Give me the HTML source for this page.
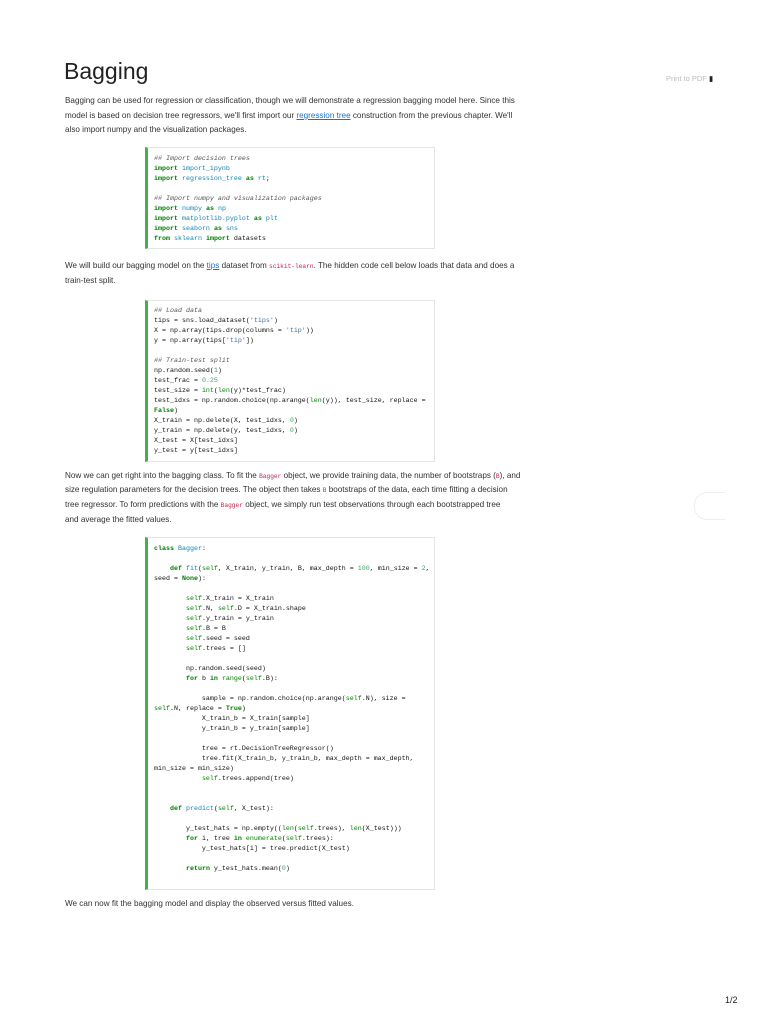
<!DOCTYPE html>
<html><head><meta charset="utf-8"><style>
html,body{margin:0;padding:0;background:#fff;width:768px;height:1024px;overflow:hidden;position:relative}
.t{position:absolute;left:65px;font-family:"Liberation Sans",sans-serif;font-size:8.15px;color:#333;white-space:nowrap;line-height:10px}
.t a{color:#1a73c8;text-decoration:underline}
.ic{font-family:"Liberation Mono",monospace;font-size:6.2px;color:#c7254e}
.cb{position:absolute;left:145px;width:286px;border:1px solid #e4e4e4;border-left:3px solid #44b04c;background:#fff}
.l{position:absolute;left:6px;font-family:"Liberation Mono",monospace;font-size:6.67px;line-height:10px;white-space:pre;color:#111}
.k{color:#008000;font-weight:bold}.n{color:#0e84b5}.c{color:#555;font-style:italic}.m{color:#40a070}.s{color:#4070a0}.b{color:#008000}
</style></head><body>
<div style="position:absolute;left:64px;top:58px;font-family:'Liberation Sans',sans-serif;font-size:23px;color:#222">Bagging</div>
<div style="position:absolute;left:666px;top:74px;font-family:'Liberation Sans',sans-serif;font-size:7.5px;color:#bbb">Print to PDF <span style="color:#222">&#9646;</span></div>

<div class="t" style="top:96px">Bagging can be used for regression or classification, though we will demonstrate a regression bagging model here. Since this</div>
<div class="t" style="top:111px">model is based on decision tree regressors, we'll first import our <a>regression tree</a> construction from the previous chapter. We'll</div>
<div class="t" style="top:125px">also import numpy and the visualization packages.</div>

<div class="cb" style="top:147px;height:100px">
<div class="l" style="top:6px"><span class="c">## Import decision trees</span></div>
<div class="l" style="top:16px"><span class="k">import</span> <span class="n">import_ipynb</span></div>
<div class="l" style="top:26px"><span class="k">import</span> <span class="n">regression_tree</span> <span class="k">as</span> <span class="n">rt</span>;</div>
<div class="l" style="top:46px"><span class="c">## Import numpy and visualization packages</span></div>
<div class="l" style="top:56px"><span class="k">import</span> <span class="n">numpy</span> <span class="k">as</span> <span class="n">np</span></div>
<div class="l" style="top:66px"><span class="k">import</span> <span class="n">matplotlib.pyplot</span> <span class="k">as</span> <span class="n">plt</span></div>
<div class="l" style="top:76px"><span class="k">import</span> <span class="n">seaborn</span> <span class="k">as</span> <span class="n">sns</span></div>
<div class="l" style="top:86px"><span class="k">from</span> <span class="n">sklearn</span> <span class="k">import</span> datasets</div>
</div>

<div class="t" style="top:261px">We will build our bagging model on the <a>tips</a> dataset from <span class="ic">scikit-learn</span>. The hidden code cell below loads that data and does a</div>
<div class="t" style="top:276px">train-test split.</div>

<div class="cb" style="top:300px;height:160px">
<div class="l" style="top:5px"><span class="c">## Load data</span></div>
<div class="l" style="top:15px">tips = sns.load_dataset(<span class="s">'tips'</span>)</div>
<div class="l" style="top:25px">X = np.array(tips.drop(columns = <span class="s">'tip'</span>))</div>
<div class="l" style="top:35px">y = np.array(tips[<span class="s">'tip'</span>])</div>
<div class="l" style="top:55px"><span class="c">## Train-test split</span></div>
<div class="l" style="top:65px">np.random.seed(<span class="m">1</span>)</div>
<div class="l" style="top:75px">test_frac = <span class="m">0.25</span></div>
<div class="l" style="top:85px">test_size = <span class="b">int</span>(<span class="b">len</span>(y)*test_frac)</div>
<div class="l" style="top:95px">test_idxs = np.random.choice(np.arange(<span class="b">len</span>(y)), test_size, replace =</div>
<div class="l" style="top:105px"><span class="k">False</span>)</div>
<div class="l" style="top:115px">X_train = np.delete(X, test_idxs, <span class="m">0</span>)</div>
<div class="l" style="top:125px">y_train = np.delete(y, test_idxs, <span class="m">0</span>)</div>
<div class="l" style="top:135px">X_test = X[test_idxs]</div>
<div class="l" style="top:145px">y_test = y[test_idxs]</div>
</div>

<div class="t" style="top:471px">Now we can get right into the bagging class. To fit the <span class="ic">Bagger</span> object, we provide training data, the number of bootstraps (<span class="ic">B</span>), and</div>
<div class="t" style="top:485px">size regulation parameters for the decision trees. The object then takes <span class="ic">B</span> bootstraps of the data, each time fitting a decision</div>
<div class="t" style="top:500px">tree regressor. To form predictions with the <span class="ic">Bagger</span> object, we simply run test observations through each bootstrapped tree</div>
<div class="t" style="top:515px">and average the fitted values.</div>

<div style="position:absolute;left:694px;top:492px;width:30px;height:26px;border:1px solid #eee;border-right:none;border-radius:13px 0 0 13px;background:#fff"></div>

<div class="cb" style="top:537px;height:351px">
<div class="l" style="top:6px"><span class="k">class</span> <span class="n">Bagger</span>:</div>
<div class="l" style="top:26px">    <span class="k">def</span> <span class="n">fit</span>(<span class="b">self</span>, X_train, y_train, B, max_depth = <span class="m">100</span>, min_size = <span class="m">2</span>,</div>
<div class="l" style="top:36px">seed = <span class="k">None</span>):</div>
<div class="l" style="top:56px">        <span class="b">self</span>.X_train = X_train</div>
<div class="l" style="top:66px">        <span class="b">self</span>.N, <span class="b">self</span>.D = X_train.shape</div>
<div class="l" style="top:76px">        <span class="b">self</span>.y_train = y_train</div>
<div class="l" style="top:86px">        <span class="b">self</span>.B = B</div>
<div class="l" style="top:96px">        <span class="b">self</span>.seed = seed</div>
<div class="l" style="top:106px">        <span class="b">self</span>.trees = []</div>
<div class="l" style="top:126px">        np.random.seed(seed)</div>
<div class="l" style="top:136px">        <span class="k">for</span> b <span class="k">in</span> <span class="b">range</span>(<span class="b">self</span>.B):</div>
<div class="l" style="top:156px">            sample = np.random.choice(np.arange(<span class="b">self</span>.N), size =</div>
<div class="l" style="top:166px"><span class="b">self</span>.N, replace = <span class="k">True</span>)</div>
<div class="l" style="top:176px">            X_train_b = X_train[sample]</div>
<div class="l" style="top:186px">            y_train_b = y_train[sample]</div>
<div class="l" style="top:206px">            tree = rt.DecisionTreeRegressor()</div>
<div class="l" style="top:216px">            tree.fit(X_train_b, y_train_b, max_depth = max_depth,</div>
<div class="l" style="top:226px">min_size = min_size)</div>
<div class="l" style="top:236px">            <span class="b">self</span>.trees.append(tree)</div>
<div class="l" style="top:266px">    <span class="k">def</span> <span class="n">predict</span>(<span class="b">self</span>, X_test):</div>
<div class="l" style="top:286px">        y_test_hats = np.empty((<span class="b">len</span>(<span class="b">self</span>.trees), <span class="b">len</span>(X_test)))</div>
<div class="l" style="top:296px">        <span class="k">for</span> i, tree <span class="k">in</span> <span class="b">enumerate</span>(<span class="b">self</span>.trees):</div>
<div class="l" style="top:306px">            y_test_hats[i] = tree.predict(X_test)</div>
<div class="l" style="top:326px">        <span class="k">return</span> y_test_hats.mean(<span class="m">0</span>)</div>
</div>

<div class="t" style="top:899px">We can now fit the bagging model and display the observed versus fitted values.</div>
<div style="position:absolute;left:725px;top:995px;font-family:'Liberation Sans',sans-serif;font-size:9px;color:#222">1/2</div>
</body></html>
